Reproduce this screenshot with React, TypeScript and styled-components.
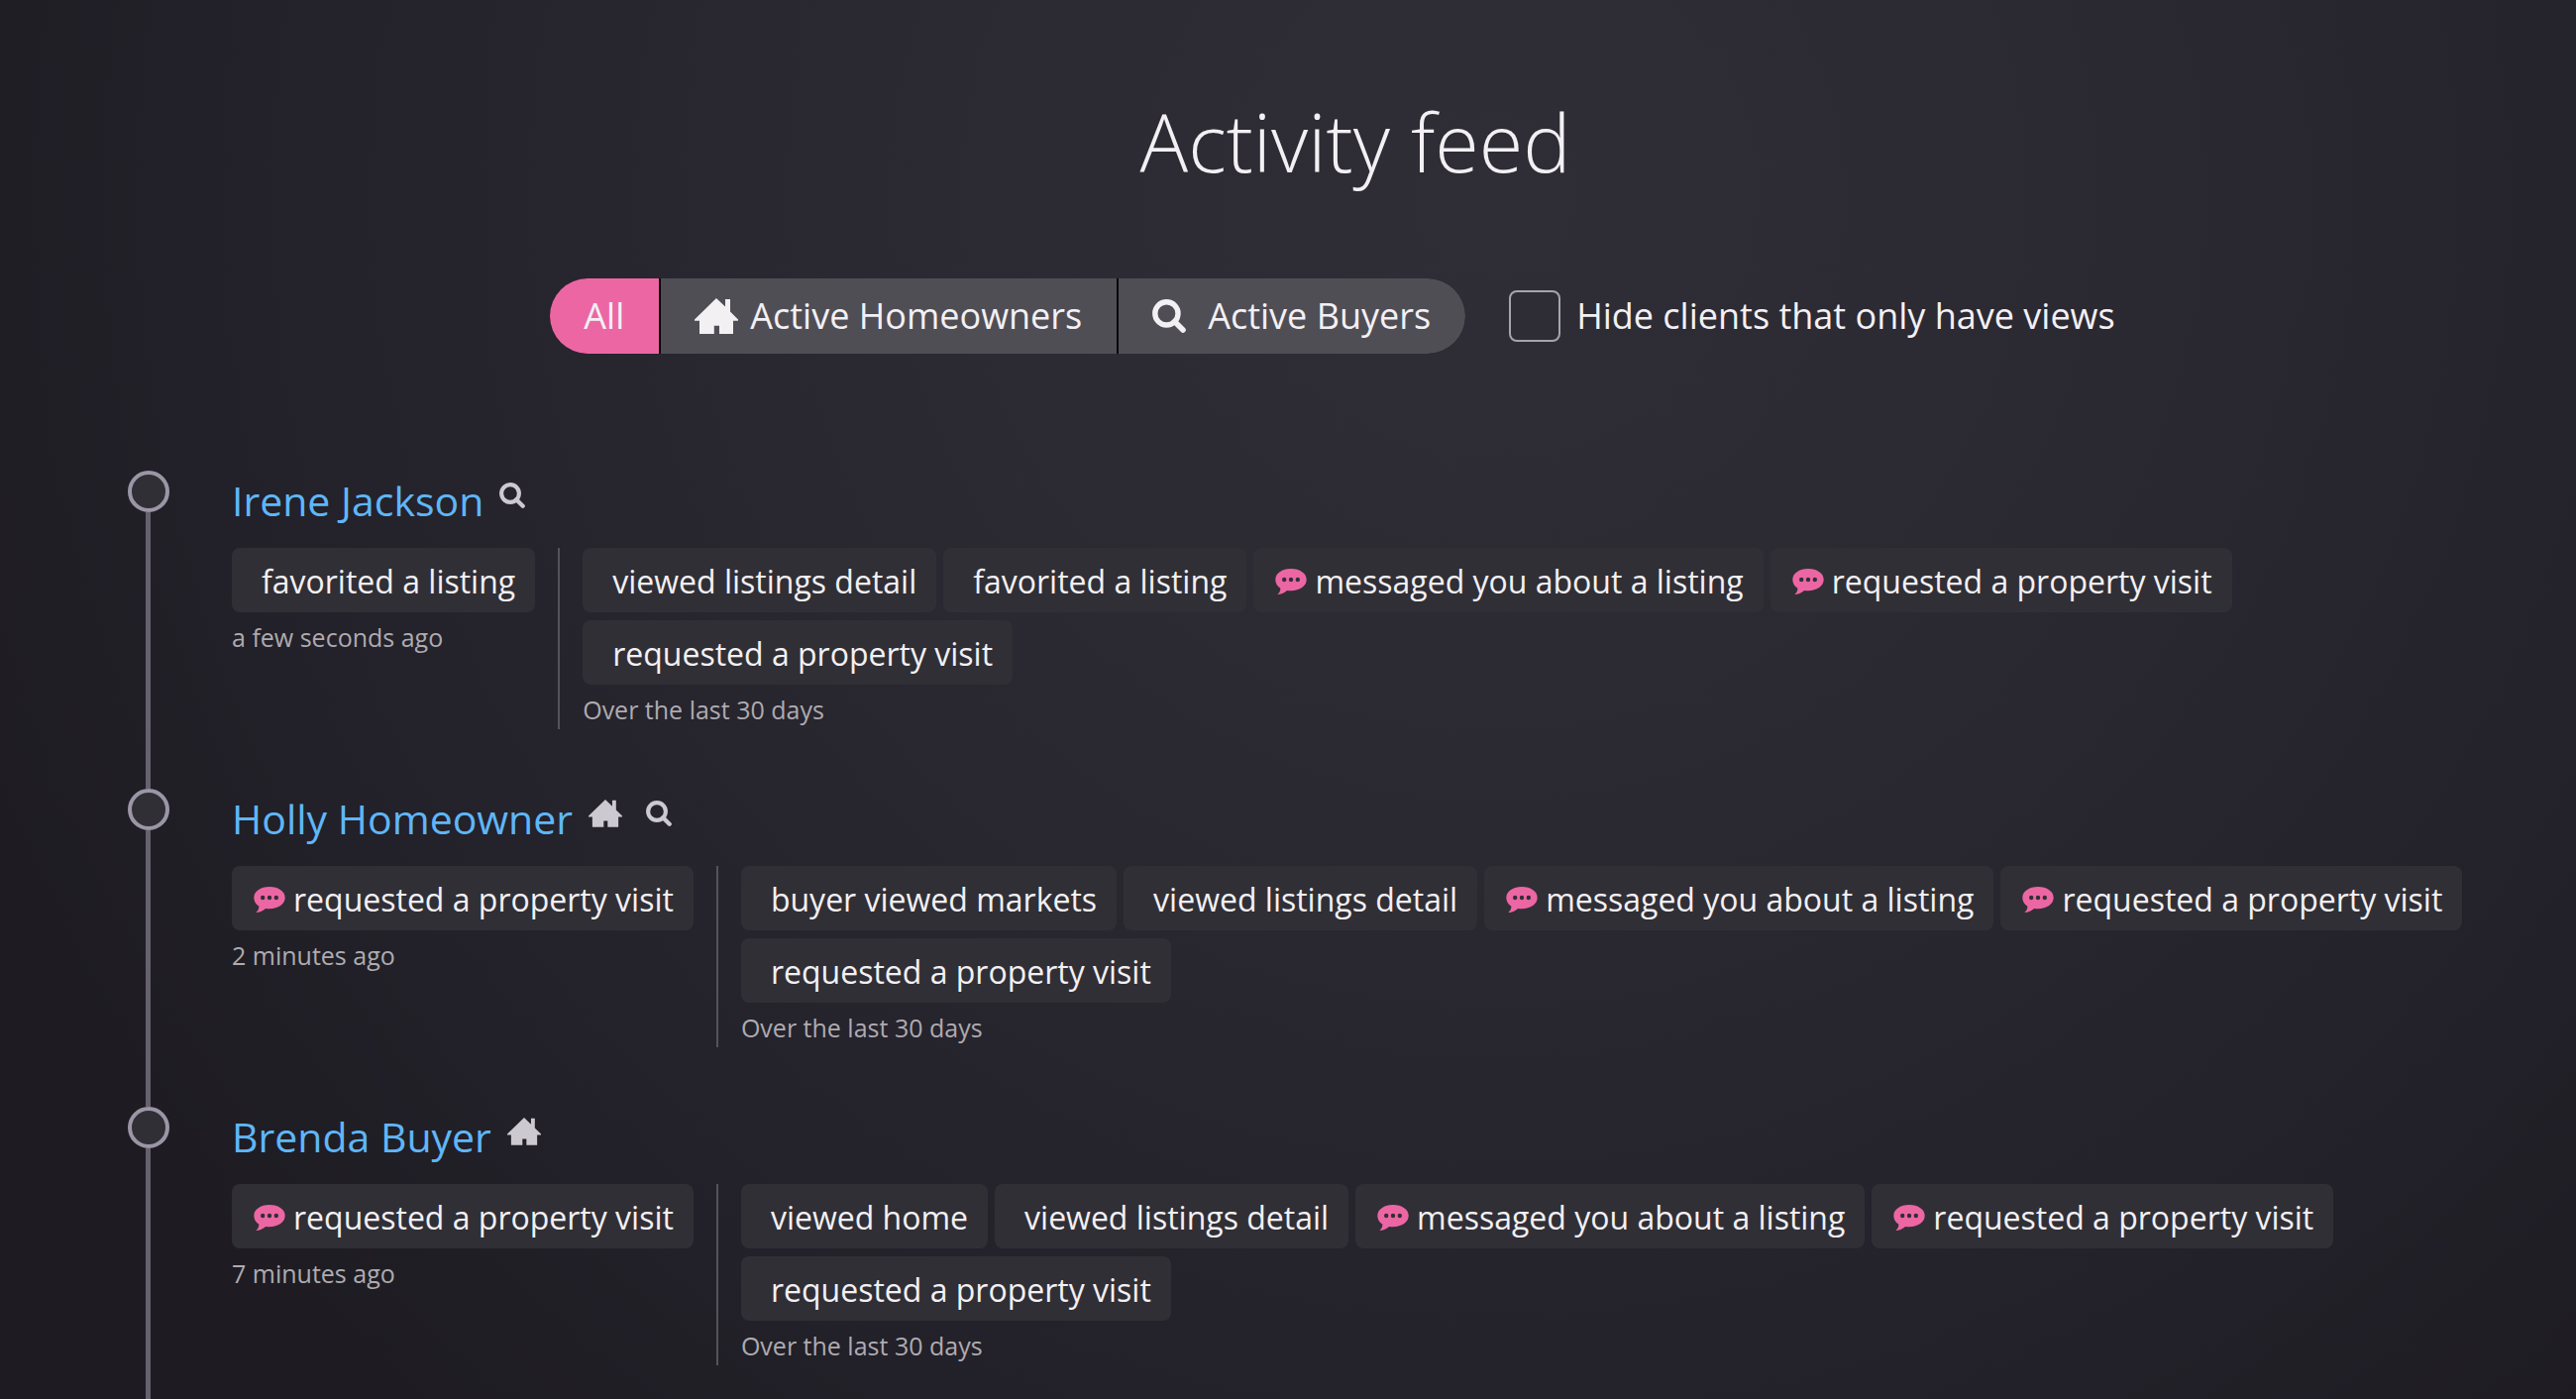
import React, { useState } from "react";
import styled, { createGlobalStyle } from "styled-components";

const GlobalStyle = createGlobalStyle`
  *, *::before, *::after { box-sizing: border-box; }
  body {
    margin: 0;
    background: #1d1b21;
    color: #f3f0f4;
    font-family: "Open Sans", "Noto Sans", sans-serif;
  }
`;

const Page = styled.main`
  display: flex;
  flex-direction: column;
  min-height: 100vh;
  padding: 86px 98px 0 128px;
  background: radial-gradient(ellipse 64% 118% at 58% 14%, #2f2d36 0%, #2b2932 35%, #24222b 70%, #1e1c22 100%);
`;

const Header = styled.header`
  display: flex;
  flex-direction: column;
  align-items: center;
  gap: 81px;
  padding-left: 106px;
  margin-bottom: 118px;
`;

const Title = styled.h1`
  margin: 0;
  font-size: 81px;
  line-height: 114px;
  font-weight: 300;
`;

const Toolbar = styled.div`
  display: flex;
  align-items: center;
  gap: 44px;
  padding-right: 46px;
`;

const Segments = styled.div`
  display: flex;
  gap: 2px;
  height: 76px;
  border-radius: 38px;
  overflow: hidden;
  background: #060608;
`;

const Segment = styled.button<{ $active: boolean }>`
  display: flex;
  align-items: center;
  gap: 11px;
  padding: 0 35px 2px 34px;
  border: 0;
  background: ${(p) => (p.$active ? "#ec66a4" : "#504e55")};
  color: inherit;
  font: inherit;
  font-size: 36px;
  cursor: pointer;
`;

const SegmentIcon = styled.span`
  display: flex;
  width: 45px;
  padding-top: 2px;
`;

const Check = styled.label`
  display: flex;
  align-items: center;
  gap: 16px;
  font-size: 36px;
  cursor: pointer;
`;

const CheckText = styled.span`
  padding-bottom: 2px;
`;

const CheckInput = styled.input`
  appearance: none;
  width: 52px;
  height: 52px;
  margin: 0;
  border: 2px solid #a8a3b0;
  border-radius: 8px;
  &:checked { background: #ec66a4; }
`;

const Feed = styled.ol`
  display: flex;
  flex: 1;
  flex-direction: column;
  margin: 0;
  padding: 0;
  list-style: none;
`;

const Entry = styled.li`
  display: grid;
  grid-template-columns: 43px minmax(0, 1fr);
  column-gap: 63px;
  &:last-child { flex: 1; }
`;

const Rail = styled.div`
  display: flex;
  flex-direction: column;
  align-items: center;
  &::before {
    content: "";
    width: 42px;
    height: 42px;
    border: 4px solid #9b96a6;
    border-radius: 50%;
    background: #302f35;
  }
  &::after {
    content: "";
    flex: 1;
    width: 5px;
    background: #65616e;
  }
`;

const Body = styled.div`
  padding-bottom: 60px;
  ${Entry}:last-child & { padding-bottom: 0; }
`;

const NameRow = styled.div`
  display: flex;
  align-items: center;
  gap: 16px;
  margin-bottom: 18px;
`;

const Name = styled.a`
  color: #5fb6f8;
  font-size: 41px;
  line-height: 60px;
  text-decoration: none;
`;

const Roles = styled.span`
  display: flex;
  align-items: center;
  gap: 24px;
  margin-bottom: 10px;
  color: #cdc9d0;
`;

const Columns = styled.div`
  display: flex;
`;

const Column = styled.section`
  flex: none;
  & + & {
    flex: 1;
    min-width: 0;
    margin-left: 23px;
    padding-left: 23px;
    border-left: 2px solid #55535a;
  }
`;

const Chips = styled.div`
  display: flex;
  flex-wrap: wrap;
  gap: 8px 7px;
`;

const Chip = styled.span`
  display: flex;
  align-items: center;
  gap: 8px;
  padding: 12px 20px 9px 22px;
  border-radius: 8px;
  background: #302f35;
  font-size: 32px;
  line-height: 44px;
  white-space: nowrap;
`;

const Caption = styled.p`
  margin: 0;
  padding: 7px 0 2px;
  color: #aeabb0;
  font-size: 25px;
  line-height: 36px;
`;

const HomeIcon = ({ width }: { width: number }) => (
  <svg width={width} viewBox="0 0 44 36" fill="currentColor" aria-hidden="true">
    <path d="M22 0 31 8.600V1h5v12.600l8 7.900v1.300h-5V36H25v-8.200h-5.200V36H5V22.800H0v-1.300z" />
  </svg>
);

const SearchIcon = ({ width }: { width: number }) => (
  <svg width={width} viewBox="0 0 34 34" fill="none" stroke="currentColor" aria-hidden="true">
    <circle cx="14.400" cy="14.400" r="11.600" strokeWidth="5.400" />
    <path d="M22.500 22.500 31 31" strokeWidth="5.600" strokeLinecap="round" />
  </svg>
);

const ChatIcon = () => (
  <svg width="32" height="26" viewBox="0 0 32 26" aria-hidden="true">
    <path
      fill="#ec66a4"
      d="M16 0C25 0 31.700 4.700 31.700 11S25 22.200 16 22.200c-1.400 0-2.700-.1-3.900-.3C9 24.600 5.800 26 2.300 26c1.800-1.500 3-3.500 3.100-6.300C2.100 17.700.3 14.600.3 11 .3 4.700 7 0 16 0z"
    />
    <g fill="#302f35">
      <circle cx="9.200" cy="11" r="2.200" />
      <circle cx="16" cy="11" r="2.200" />
      <circle cx="22.800" cy="11" r="2.200" />
    </g>
  </svg>
);

type Action = { text: string; chat?: boolean };
type Client = { name: string; roles: ("home" | "search")[]; latest: Action; ago: string; recent: Action[] };

const visit: Action = { text: "requested a property visit" };
const visitChat: Action = { ...visit, chat: true };
const message: Action = { text: "messaged you about a listing", chat: true };
const viewed: Action = { text: "viewed listings detail" };
const favorited: Action = { text: "favorited a listing" };

const clients: Client[] = [
  {
    name: "Irene Jackson",
    roles: ["search"],
    latest: favorited,
    ago: "a few seconds ago",
    recent: [viewed, favorited, message, visitChat, visit],
  },
  {
    name: "Holly Homeowner",
    roles: ["home", "search"],
    latest: visitChat,
    ago: "2 minutes ago",
    recent: [{ text: "buyer viewed markets" }, viewed, message, visitChat, visit],
  },
  {
    name: "Brenda Buyer",
    roles: ["home"],
    latest: visitChat,
    ago: "7 minutes ago",
    recent: [{ text: "viewed home" }, viewed, message, visitChat, visit],
  },
];

const ActionChip = ({ action }: { action: Action }) => (
  <Chip>
    {action.chat ? <ChatIcon /> : <span />}
    {action.text}
  </Chip>
);

const filters = [
  { label: "All", icon: null },
  { label: "Active Homeowners", icon: <HomeIcon width={44} /> },
  { label: "Active Buyers", icon: <SearchIcon width={34} /> },
];

export default function App() {
  const [filter, setFilter] = useState("All");
  return (
    <>
      <GlobalStyle />
      <Page>
        <Header>
          <Title>Activity feed</Title>
          <Toolbar>
            <Segments>
              {filters.map(({ label, icon }) => (
                <Segment
                  key={label}
                  type="button"
                  $active={filter === label}
                  aria-pressed={filter === label}
                  onClick={() => setFilter(label)}
                >
                  {icon && <SegmentIcon>{icon}</SegmentIcon>}
                  {label}
                </Segment>
              ))}
            </Segments>
            <Check htmlFor="hide-views">
              <CheckInput type="checkbox" id="hide-views" />
              <CheckText>Hide clients that only have views</CheckText>
            </Check>
          </Toolbar>
        </Header>
        <Feed>
          {clients.map((client) => (
            <Entry key={client.name}>
              <Rail />
              <Body>
                <NameRow>
                  <Name href="#">{client.name}</Name>
                  <Roles>
                    {client.roles.map((role) =>
                      role === "home" ? <HomeIcon key={role} width={34} /> : <SearchIcon key={role} width={26} />
                    )}
                  </Roles>
                </NameRow>
                <Columns>
                  <Column>
                    <Chips>
                      <ActionChip action={client.latest} />
                    </Chips>
                    <Caption>{client.ago}</Caption>
                  </Column>
                  <Column>
                    <Chips>
                      {client.recent.map((action, i) => (
                        <ActionChip key={i} action={action} />
                      ))}
                    </Chips>
                    <Caption>Over the last 30 days</Caption>
                  </Column>
                </Columns>
              </Body>
            </Entry>
          ))}
        </Feed>
      </Page>
    </>
  );
}
